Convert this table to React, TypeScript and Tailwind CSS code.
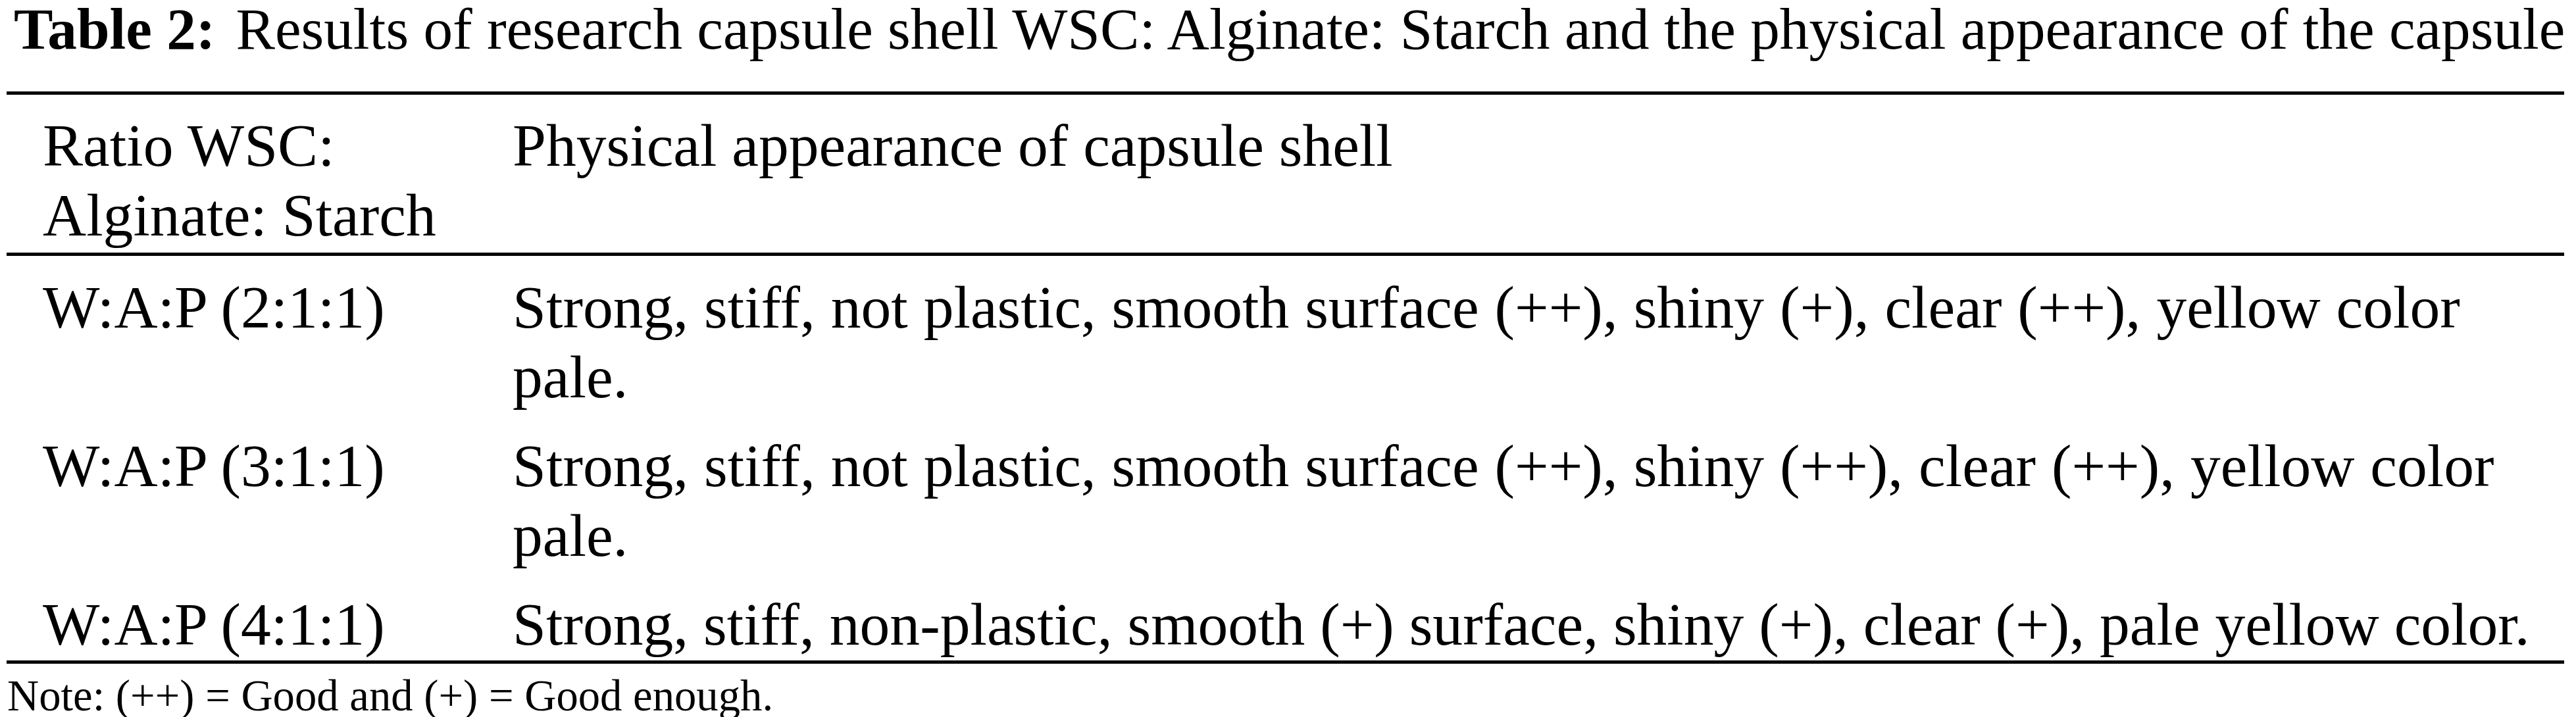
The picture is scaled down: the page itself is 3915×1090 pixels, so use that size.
const rows = [
  {
    ratio: 'W:A:P (2:1:1)',
    look: 'Strong, stiff, not plastic, smooth surface (++), shiny (+), clear (++), yellow color pale.',
  },
  {
    ratio: 'W:A:P (3:1:1)',
    look: 'Strong, stiff, not plastic, smooth surface (++), shiny (++), clear (++), yellow color pale.',
  },
  {
    ratio: 'W:A:P (4:1:1)',
    look: 'Strong, stiff, non-plastic, smooth (+) surface, shiny (+), clear (+), pale yellow color.',
  },
]

export default function App() {
  return (
    <div className="min-h-screen bg-white pl-[10px] pr-[18px] text-black font-['Liberation_Serif','Times_New_Roman',serif]">
      {/* Caption */}
      <p className="whitespace-nowrap pl-[11px] text-[89.2px] leading-[88px]">
        <span className="mr-[31px] font-bold">Table 2:</span>
        Results of research capsule shell WSC: Alginate: Starch and the physical appearance of the capsule
      </p>

      {/* Table */}
      <div className="mt-[51px] border-y-[5px] border-black text-[91.6px] leading-[106px]">
        <div className="grid grid-cols-[769px_1fr] border-b-[5px] border-black">
          <div className="pl-[55px] pt-[24px] pb-[4px]">Ratio WSC: Alginate: Starch</div>
          <div className="pt-[24px] pb-[4px]">Physical appearance of capsule shell</div>
        </div>
        {rows.map((row, i) => {
          const last = i === rows.length - 1
          return (
            <div
              key={row.ratio}
              className={
                last
                  ? 'grid grid-cols-[769px_1fr] pt-[25px] pb-[2px]'
                  : 'grid grid-cols-[769px_1fr] pt-[25px] pb-[4px]'
              }
            >
              <div className="pl-[55px]">{row.ratio}</div>
              <div className={last ? '' : '[word-spacing:1px]'}>{row.look}</div>
            </div>
          )
        })}
      </div>

      {/* Footnote */}
      <p className="mt-[12px] pl-[1px] text-[66.7px] leading-[74px]">
        Note: (++) = Good and (+) = Good enough.
      </p>
    </div>
  )
}
